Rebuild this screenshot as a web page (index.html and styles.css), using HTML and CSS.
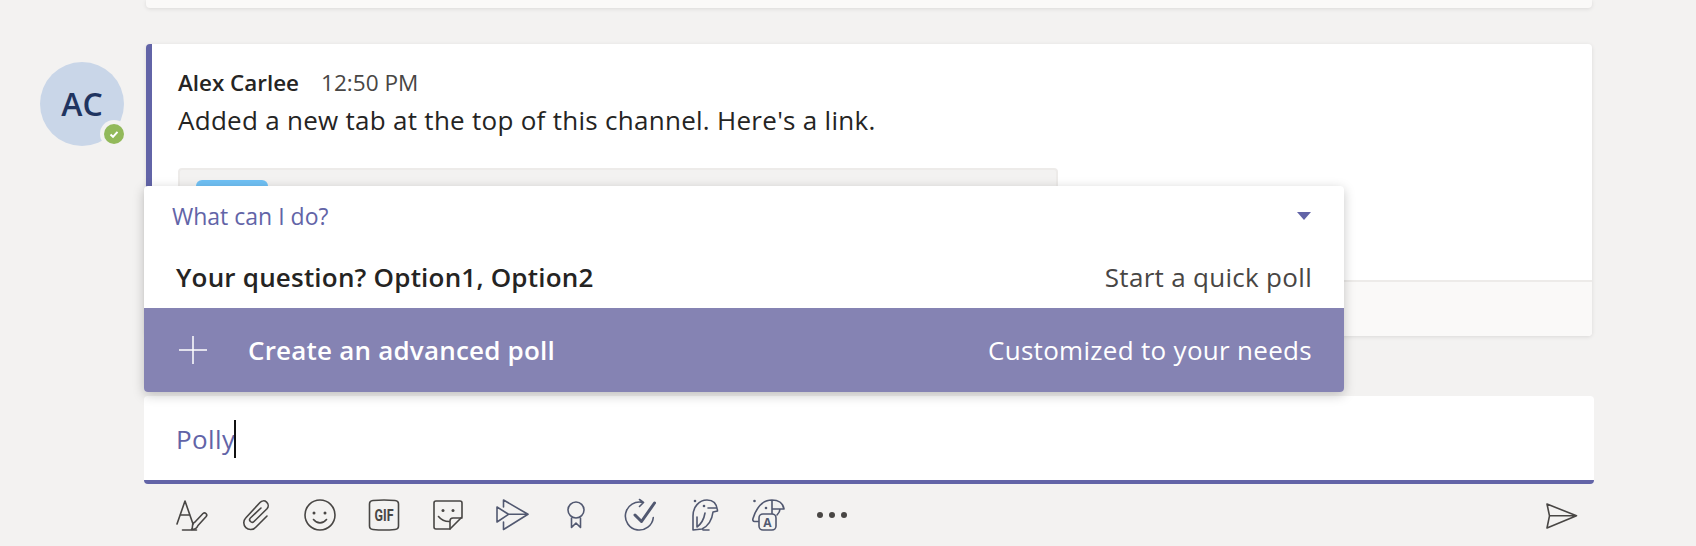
FILE: index.html
```html
<!DOCTYPE html>
<html lang="en">
<head>
<meta charset="utf-8">
<title>Polly</title>
<link rel="stylesheet" href="styles.css">
</head>
<body>
<div class="page">
  <div class="prev-card"></div>
  <div class="message-row">
    <div class="avatar">AC
      <span class="presence"><svg viewBox="0 0 20 20" width="20" height="20"><path d="M6.500 10.500l2.500 2.300 4.500-5" class="presence-check"/></svg></span>
    </div>
    <div class="card">
      <div class="card-body">
        <div class="meta"><span class="author">Alex Carlee</span><span class="time">12:50 PM</span></div>
        <div class="text">Added a new tab at the top of this channel. Here's a link.</div>
        <div class="attachment"><div class="thumb"></div></div>
      </div>
      <div class="card-foot"></div>
    </div>
  </div>

  <div class="composer"><span class="typed">Polly</span><span class="cursor"></span></div>

  <div class="toolbar">
    <span class="tool"><svg viewBox="0 0 32 32" class="ico"><path d="M1 25L9 2l8 23M4 16h10M6.500 31h14"/><path d="M19 23l8-8.500a2.200 2.200 0 0 1 3.200 3L22 26.500c-1 2.500-3 4-6.500 4 1-1 1-2.500 1-3.500 0-2 1-3.500 2.500-4z"/></svg></span>
    <span class="tool"><svg viewBox="0 0 32 32" class="ico"><path d="M27 17L15.500 28.500a6.800 6.800 0 0 1-9.800-9.500L20 3.500a4.600 4.600 0 0 1 7 6.200L14 22.500a2.500 2.500 0 0 1-3.600-3.500L21 9"/></svg></span>
    <span class="tool"><svg viewBox="0 0 32 32" class="ico"><circle cx="16" cy="16" r="15"/><path d="M9.500 20.500c3.500 4.500 9.500 4.500 13 0"/><circle cx="10" cy="14" r="1.500" class="solid"/><circle cx="21" cy="14" r="1.500" class="solid"/></svg></span>
    <span class="tool"><svg viewBox="0 0 32 32" class="ico"><path d="M5 1.500c7-.7 15-.7 22 0 2 .2 3.500 1.500 3.500 3.500v22c0 2-1.500 3.300-3.500 3.500-7 .7-15 .7-22 0-2-.2-3.500-1.500-3.500-3.500V5c0-2 1.500-3.300 3.500-3.500z"/><text x="16" y="21.500" textLength="19" lengthAdjust="spacingAndGlyphs" class="gif">GIF</text></svg></span>
    <span class="tool"><svg viewBox="0 0 32 32" class="ico"><path d="M18 30H4a2 2 0 0 1-2-2V4a2 2 0 0 1 2-2h24a2 2 0 0 1 2 2v14z"/><path d="M18 30v-8a3 3 0 0 1 3-3h9M6.500 17.500c3 3.800 7 5.200 11.500 5"/><circle cx="11" cy="11.500" r="1.500" class="solid"/><circle cx="21" cy="11.500" r="1.500" class="solid"/></svg></span>
    <span class="tool"><svg viewBox="0 0 32 32" class="ico blue"><path d="M7.500 8V1l24.500 14.300L7.500 30.500V23M1 8l11.500 7.300L1 23zM12.500 15.300H32"/></svg></span>
    <span class="tool"><svg viewBox="0 0 32 32" class="ico blue"><circle cx="16" cy="11" r="8"/><path d="M11.500 19v9.500l4.500-4.500 4.500 4.500V19"/></svg></span>
    <span class="tool"><svg viewBox="0 0 32 32" class="ico blue"><path d="M29.300 18.500A14 14 0 1 1 19 3.500M15.500 .5L19.500 3.500 15.500 7.500"/><path d="M11 16l6.500 6.500L30.500 4" class="thick"/></svg></span>
    <span class="tool"><svg viewBox="0 0 32 32" class="ico blue"><path d="M5 31V17C5 8 11 1 19 1c6 0 10 4 10.500 11l-4.500 1c-1 8-5 14-11 17zM20 9h9M9 18v10c4-3 7-8 8-14M15 31h6"/><circle cx="16" cy="7" r="1.300" class="solid"/><circle cx="7" cy="2" r="1.300" class="solid"/></svg></span>
    <span class="tool"><svg viewBox="0 0 32 32" class="ico blue"><path d="M7 22.500H2.500c-1.500 0-2-1.500-1.500-3C4 10 9 1 20 1c6 0 11 3 12 9H20V1M20 10v6M28 10c0 2-1 4-3 6"/><rect x="7" y="15" width="17" height="16" rx="4" class="card-fill"/><text x="15.500" y="27.500" class="badge-a">A</text><circle cx="14" cy="9" r="1.300" class="solid"/><circle cx="2.500" cy="2" r="1.300" class="solid"/></svg></span>
    <span class="tool"><svg viewBox="0 0 32 32" class="ico"><circle cx="4" cy="16" r="3" class="solid"/><circle cx="16" cy="16" r="3" class="solid"/><circle cx="28" cy="16" r="3" class="solid"/></svg></span>
    <span class="tool send"><svg viewBox="0 0 32 32" class="ico"><path d="M1 5l29.500 11.800L1 29l2.500-12.200zM3.500 16.800h27"/></svg></span>
  </div>

  <div class="popup">
    <div class="popup-head"><span>What can I do?</span><span class="tri"></span></div>
    <div class="popup-row"><span class="strong">Your question? Option1, Option2</span><span class="hint">Start a quick poll</span></div>
    <div class="popup-row active">
      <span class="left"><svg viewBox="0 0 28 28" class="plus"><path d="M14 0v28M0 14h28"/></svg><span class="strong">Create an advanced poll</span></span>
      <span class="hint">Customized to your needs</span>
    </div>
  </div>
</div>
</body>
</html>
```
FILE: styles.css
```css
* { box-sizing: border-box; }
html, body { margin: 0; padding: 0; }
body { background: #f3f2f1; font-family: "Open Sans", "Noto Sans", sans-serif; color: #252423; }
.page { position: relative; width: 1696px; height: 546px; overflow: hidden; }

.prev-card { margin-left: 146px; width: 1446px; height: 8px; background: #faf9f8; border-radius: 0 0 4px 4px; box-shadow: 0 1px 4px rgba(0,0,0,.1); }

.message-row { display: flex; align-items: flex-start; margin-top: 36px; padding-left: 40px; gap: 22px; }
.avatar { position: relative; flex: none; width: 84px; height: 84px; margin-top: 18px; padding-bottom: 2px; border-radius: 50%; background: #c9d6e8; color: #1f3460; font-size: 32px; font-weight: 600; display: flex; align-items: center; justify-content: center; }
.presence { position: absolute; right: -4px; bottom: -2px; width: 28px; height: 28px; border-radius: 50%; background: #f3f2f1; display: flex; align-items: center; justify-content: center; }
.presence svg { border-radius: 50%; background: #92b95a; }
.presence-check { fill: none; stroke: #fff; stroke-width: 2; }

.card { width: 1446px; height: 292px; background: #fff; border-left: 6px solid #6264a7; border-radius: 4px; box-shadow: 0 1px 4px rgba(0,0,0,.1); display: flex; flex-direction: column; }
.card-body { flex: none; height: 236px; padding: 23px 0 0 26px; overflow: hidden; }
.meta { display: flex; align-items: baseline; gap: 22px; height: 32px; line-height: 32px; }
.author { font-size: 22.400px; font-weight: 600; color: #252423; }
.time { font-size: 22.600px; color: #484644; }
.text { font-size: 26px; letter-spacing: .28px; line-height: 38px; margin-top: 2px; color: #252423; }
.attachment { margin-top: 29px; width: 880px; height: 90px; background: #f3f2f1; border: 2px solid #edebe9; border-radius: 4px; padding: 10px 0 0 16px; }
.thumb { width: 72px; height: 50px; background: #70c1f5; border-radius: 6px; }
.card-foot { flex: 1; border-top: 2px solid #edebe9; background: #faf9f8; border-radius: 0 0 4px 0; }

.composer { margin: 60px 0 0 144px; width: 1450px; height: 88px; background: #fff; border-bottom: 4px solid #6264a7; border-radius: 4px; padding: 24px 0 0 32px; display: flex; align-items: flex-start; }
.typed { font-size: 26px; letter-spacing: .4px; line-height: 38px; color: #6264a7; }
.cursor { width: 2px; height: 38px; background: #111; margin-left: -1px; }

.toolbar { margin-left: 160px; width: 1434px; height: 62px; display: flex; align-items: center; }
.tool { flex: none; width: 64px; height: 32px; display: flex; justify-content: center; }
.send { margin-left: auto; }
.ico { width: 32px; height: 32px; fill: none; stroke: #484644; stroke-width: 1.6; stroke-linejoin: round; stroke-linecap: round; overflow: visible; }
.ico.blue { stroke: #515870; }
.ico .solid { fill: #484644; stroke: none; }
.ico.blue .solid { fill: #515870; }
.ico .thick { stroke-width: 3; }
.ico .card-fill { fill: #f3f2f1; }
.ico .gif { font-family: "Roboto", sans-serif; font-size: 16px; font-weight: 700; fill: #484644; stroke: none; text-anchor: middle; }
.ico .badge-a { font-family: "Open Sans", sans-serif; font-size: 12px; font-weight: 700; fill: #515870; stroke: none; text-anchor: middle; }

.popup { position: absolute; left: 144px; top: 186px; width: 1200px; height: 206px; background: #fff; border-radius: 4px; box-shadow: 0 3px 12px rgba(0,0,0,.22); overflow: hidden; display: flex; flex-direction: column; }
.popup-head { flex: none; height: 56px; padding: 4px 33px 0 28px; display: flex; justify-content: space-between; align-items: center; font-size: 23px; color: #6264a7; }
.tri { width: 0; height: 0; border-left: 7px solid transparent; border-right: 7px solid transparent; border-top: 8px solid #6264a7; }
.popup-row { flex: 1; display: flex; justify-content: space-between; align-items: center; padding: 0 32px 0 32px; font-size: 26px; letter-spacing: .2px; }
.popup-head + .popup-row { flex: none; height: 66px; padding-top: 4px; }
.strong { font-weight: 600; }
.hint { color: #484644; letter-spacing: .3px; }
.active { background: #8583b3; color: #fff; padding-left: 35px; }
.active .hint { color: #fff; }
.left { display: flex; align-items: center; gap: 41px; }
.plus { width: 28px; height: 28px; fill: none; stroke: #fff; stroke-width: 1.5; }
```
